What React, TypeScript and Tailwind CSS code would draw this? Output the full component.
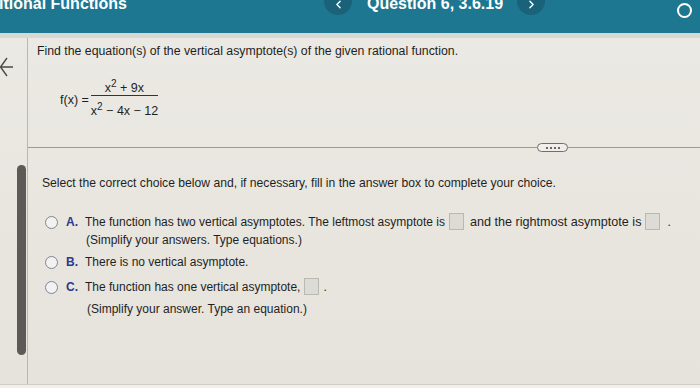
import { ChevronLeft, ChevronRight } from "lucide-react";

function AnswerBox() {
  return (
    <span className="inline-block w-[15px] h-[17px] align-middle mx-[4px] -mt-[2px] bg-[#dcdbd6] border border-[#b9b8b3]" />
  );
}

function Radio() {
  return (
    <span className="shrink-0 w-[13px] h-[13px] rounded-full border-[1.5px] border-[#80829c] bg-[#f2f2f0]" />
  );
}

function Choice({ letter, children }: { letter: string; children: React.ReactNode }) {
  return (
    <div className="flex items-center h-[18px] leading-[18px] pl-[17px]">
      <Radio />
      <span className="ml-[8px] w-[19px] font-bold text-[#2a3a8c]">{letter}</span>
      <span className="whitespace-nowrap">{children}</span>
    </div>
  );
}

export default function App() {
  return (
    <div className="w-[700px] h-[388px] overflow-hidden flex flex-col bg-[#e7e5de] text-[#1f1f1f] font-['Liberation_Sans',Arial,sans-serif]">
      {/* top bar */}
      <div className="h-[33px] shrink-0 flex items-start overflow-hidden bg-[#1e7791] text-white">
        <div className="w-[325px] shrink-0 -ml-[1px] -mt-[4px] text-[16px] leading-[16px] font-bold whitespace-nowrap">
          itional Functions
        </div>
        <div className="w-[28px] h-[28px] -mt-[13px] shrink-0 rounded-full bg-[#1a627a] flex items-center justify-center">
          <ChevronLeft size={13} strokeWidth={2.5} className="mt-[6px]" />
        </div>
        <div className="ml-[15px] -mt-[4px] text-[16px] leading-[16px] font-bold whitespace-nowrap">
          Question 6, 3.6.19
        </div>
        <div className="ml-[14px] w-[28px] h-[28px] -mt-[13px] shrink-0 rounded-full bg-[#1a627a] flex items-center justify-center">
          <ChevronRight size={13} strokeWidth={2.5} className="mt-[6px]" />
        </div>
        <div className="flex-1" />
        <div className="mt-[3px] mr-[8px] w-[15px] h-[15px] rounded-full border-2 border-white" />
      </div>
      <div className="h-[5px] shrink-0 bg-[#d8d7d1]" />

      {/* body */}
      <div className="flex-1 flex bg-linear-to-b from-[#ebe9e3] to-[#e5e3db]">
        <div className="w-[28px] shrink-0 border-r border-[#b9b7b0] flex flex-col">
          <svg width="14" height="20" viewBox="0 0 14 20" className="mt-[19px]">
            <path d="M7 1 L0.5 10 L7 19 M0.5 10 H13" fill="none" stroke="#4a4a48" strokeWidth="1.4" />
          </svg>
          <div className="mt-[88px] ml-[17px] w-[9px] h-[190px] rounded-full bg-[#5c5956]" />
        </div>

        <div className="flex-1 flex flex-col text-[12px]">
          <div className="mt-[5px] pl-[9px] h-[16px] leading-[16px] text-[12.3px] whitespace-nowrap">
            Find the equation(s) of the vertical asymptote(s) of the given rational function.
          </div>

          <div className="mt-[22px] ml-[32px] flex items-center text-[12.5px]">
            <span className="whitespace-nowrap">f(x) =</span>
            <div className="ml-[2px] w-[67px] flex flex-col text-center">
              <div className="h-[15px] leading-[15px] border-b border-[#333] whitespace-nowrap">
                x<sup className="text-[10px] -top-[5px]">2</sup> + 9x
              </div>
              <div className="pt-[8px] h-[23px] leading-[15px] whitespace-nowrap">
                x<sup className="text-[10px] -top-[5px]">2</sup> − 4x − 12
              </div>
            </div>
          </div>

          <div className="mt-[24px] flex items-center h-[9px]">
            <div className="flex-1 h-px bg-[#9c9b97]" />
            <div className="w-[31px] h-[9px] rounded-full border border-[#6d6d6b] bg-[#efeeea] flex items-center justify-center gap-[2px]">
              <span className="w-[2px] h-[2px] bg-[#666]" />
              <span className="w-[2px] h-[2px] bg-[#666]" />
              <span className="w-[2px] h-[2px] bg-[#666]" />
              <span className="w-[2px] h-[2px] bg-[#666]" />
            </div>
            <div className="w-[132px] h-px bg-[#9c9b97]" />
          </div>

          <div className="mt-[23px] pl-[14px] h-[16px] leading-[16px] text-[12.15px] whitespace-nowrap">
            Select the correct choice below and, if necessary, fill in the answer box to complete your choice.
          </div>

          <div className="mt-[22px]">
            <Choice letter="A.">
              The function has two vertical asymptotes. The leftmost asymptote is
              <AnswerBox />
              <span className="ml-[2px] text-[12.6px]">and the rightmost asymptote is</span>
              <AnswerBox />
              <span className="ml-[3px]">.</span>
            </Choice>
            <div className="pl-[58px] h-[18px] leading-[18px] whitespace-nowrap">
              (Simplify your answers. Type equations.)
            </div>
          </div>

          <div className="mt-[4px]">
            <Choice letter="B.">There is no vertical asymptote.</Choice>
          </div>

          <div className="mt-[7px]">
            <Choice letter="C.">
              The function has one vertical asymptote,
              <AnswerBox />
              <span>.</span>
            </Choice>
            <div className="mt-[4px] pl-[59px] h-[18px] leading-[18px] whitespace-nowrap">
              (Simplify your answer. Type an equation.)
            </div>
          </div>
        </div>
      </div>
      <div className="h-[4px] shrink-0 border-t border-[#cfcdc6] bg-[#f0efea]" />
    </div>
  );
}
